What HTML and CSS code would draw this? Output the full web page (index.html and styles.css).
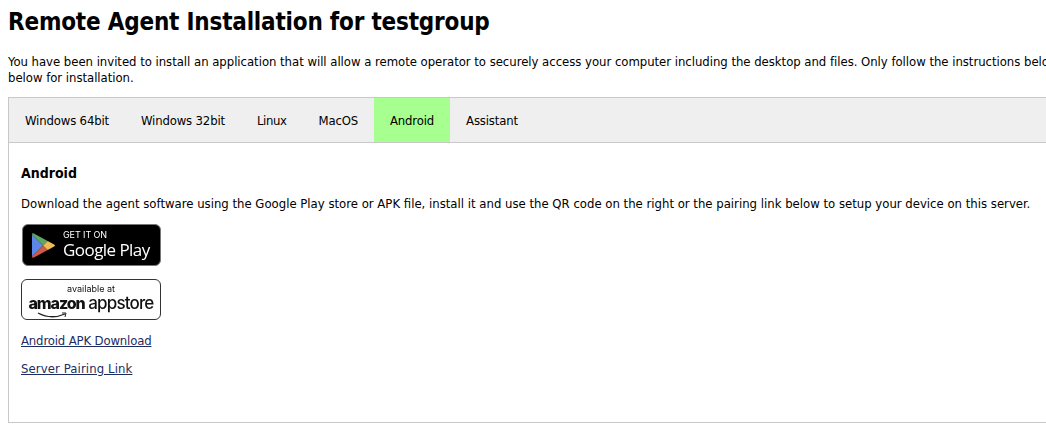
FILE: index.html
```html
<!DOCTYPE html>
<html lang="en">
<head>
<meta charset="utf-8">
<title>Remote Agent Installation</title>
<link rel="stylesheet" href="styles.css">
</head>
<body>
<h1 class="title">Remote Agent Installation for testgroup</h1>
<p class="intro">You have been invited to install an application that will allow a remote operator to securely access your computer including the desktop and files. Only follow the instructions below<br>below for installation.</p>
<div class="panel">
  <nav class="tabs">
    <a class="tab">Windows 64bit</a>
    <a class="tab">Windows 32bit</a>
    <a class="tab tab-linux">Linux</a>
    <a class="tab">MacOS</a>
    <a class="tab active">Android</a>
    <a class="tab">Assistant</a>
  </nav>
  <section class="content">
    <h3 class="heading">Android</h3>
    <p class="lead">Download the agent software using the Google Play store or APK file, install it and use the QR code on the right or the pairing link below to setup your device on this server.</p>
    <div class="badge badge-play">
      <svg class="play-icon" width="24" height="27" viewBox="0 0 26 28">
        <path d="M0 2 L0 26 L12 14 Z" fill="#5c86e8"/>
        <path d="M0 2 Q0 0 2 1 L17 9 L12 14 Z" fill="#5fa565"/>
        <path d="M0 26 Q0 28 2 27 L17 19 L12 14 Z" fill="#cf5a4c"/>
        <path d="M17 9 L24 13 Q26 14 24 15 L17 19 L12 14 Z" fill="#ecbd52"/>
      </svg>
      <div class="play-text">
        <span class="play-small">GET IT ON</span>
        <span class="play-big">Google Play</span>
      </div>
    </div>
    <div class="badge badge-amazon">
      <span class="amazon-small">available at</span>
      <span class="amazon-big"><b>amazon</b> appstore</span>
      <svg class="smile" width="38" height="8" viewBox="0 0 38 8">
        <path d="M1 1 Q14 8 28 2" fill="none" stroke="#222" stroke-width="1.3"/>
        <path d="M25 1 L29 1 L28 5" fill="none" stroke="#222" stroke-width="1"/>
      </svg>
    </div>
    <p class="link-row link-first"><a class="link link-apk" href="#">Android APK Download</a></p>
    <p class="link-row"><a class="link link-pair" href="#">Server Pairing Link</a></p>
  </section>
</div>
</body>
</html>
```
FILE: styles.css
```css
html, body {
  overflow: hidden;
}
body {
  margin: 0;
  width: 1060px;
  height: 434px;
  padding: 0 0 0 8px;
  background: #fff;
  color: #000;
  font-family: "DejaVu Sans Condensed", "DejaVu Sans", sans-serif;
  font-size: 13px;
  line-height: 16px;
}
.title {
  margin: 0;
  padding-top: 7px;
  font-size: 24px;
  line-height: 30px;
  font-weight: bold;
  letter-spacing: -0.2px;
}
.intro {
  margin: 17px 0 0;
  white-space: nowrap;
  letter-spacing: -0.03px;
}
.panel {
  margin-top: 11px;
  width: 1060px;
  height: 326px;
  box-sizing: border-box;
  border: 1px solid #c8c8c8;
}
.tabs {
  display: flex;
  height: 44px;
  background: #efefef;
  border-bottom: 1px solid #c8c8c8;
}
.tab {
  display: flex;
  align-items: center;
  padding: 2px 16px 0;
  letter-spacing: -0.16px;
}
.tab-linux {
  letter-spacing: -0.4px;
}
.tab.active {
  background: #a6ff8f;
}
.content {
  padding: 21px 12px 0;
}
.heading {
  margin: 0;
  font-size: 14px;
  line-height: 18px;
  font-weight: bold;
}
.lead {
  margin: 14px 0 0;
  white-space: nowrap;
}
.badge {
  box-sizing: border-box;
  border-radius: 6px;
  width: 140px;
  height: 42px;
  font-family: "Inter", sans-serif;
  filter: blur(0.3px);
}
.badge-play {
  display: flex;
  align-items: center;
  gap: 7px;
  margin-top: 12px;
  margin-left: 1px;
  width: 139px;
  padding-left: 9px;
  background: #000;
  border: 1px solid #777;
  color: #fff;
}
.play-text {
  display: flex;
  flex-direction: column;
}
.play-small {
  font-size: 9px;
  line-height: 10px;
  letter-spacing: -0.1px;
}
.play-big {
  font-family: "Open Sans", sans-serif;
  font-size: 17px;
  font-weight: 500;
  line-height: 20px;
  letter-spacing: -0.55px;
  white-space: nowrap;
}
.badge-amazon {
  position: relative;
  display: flex;
  flex-direction: column;
  align-items: center;
  height: 41px;
  margin-top: 13px;
  background: #fff;
  border: 1px solid #333;
  color: #111;
}
.amazon-small {
  font-size: 9px;
  line-height: 10px;
  margin-top: 4px;
}
.amazon-big {
  font-size: 17px;
  font-weight: 500;
  line-height: 18px;
  letter-spacing: -0.85px;
  white-space: nowrap;
}
.amazon-big b {
  font-size: 16px;
  font-weight: 800;
  letter-spacing: -1.1px;
}
.smile {
  position: absolute;
  left: 15px;
  bottom: -1px;
}
.link-row {
  margin: 12px 0 0;
}
.link-first {
  margin-top: 13px;
}
.link {
  color: #1d2d5f;
  text-decoration: underline;
}
.link-apk {
  letter-spacing: -0.15px;
}
.link-pair {
  letter-spacing: 0.1px;
}
```
